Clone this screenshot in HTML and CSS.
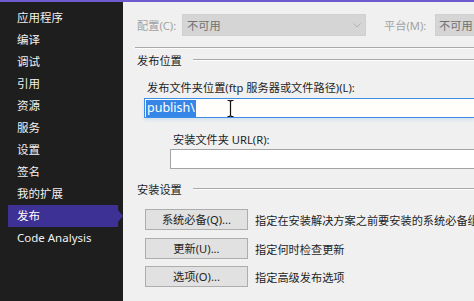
FILE: index.html
```html
<!DOCTYPE html>
<html lang="zh-CN">
<head>
<meta charset="utf-8">
<title>发布</title>
<link rel="stylesheet" href="styles.css">
</head>
<body>
<div class="topbar"></div>
<div class="main">
  <nav class="sidebar">
    <div class="nav-item">应用程序</div>
    <div class="nav-item">编译</div>
    <div class="nav-item">调试</div>
    <div class="nav-item">引用</div>
    <div class="nav-item">资源</div>
    <div class="nav-item">服务</div>
    <div class="nav-item">设置</div>
    <div class="nav-item">签名</div>
    <div class="nav-item">我的扩展</div>
    <div class="nav-item active">发布</div>
    <div class="nav-item">Code Analysis</div>
  </nav>
  <section class="content">
    <div class="toprow">
      <span class="dlabel cfg">配置(C):</span>
      <div class="combo combo1"><span>不可用</span><svg class="chev" width="8" height="5" viewBox="0 0 8 5"><path d="M0.5 0.5 L4 4 L7.5 0.5" fill="none" stroke="#b0b0b0" stroke-width="1"/></svg></div>
      <span class="dlabel plat">平台(M):</span>
      <div class="combo combo2"><span>不可用</span></div>
    </div>
    <div class="sep"></div>
    <div class="header h1"><span>发布位置</span><div class="hline"></div></div>
    <div class="label l1">发布文件夹位置(ftp 服务器或文件路径)(L):</div>
    <div class="textbox active-box"><span class="sel">publish\</span>
      <svg class="ibeam" width="7" height="17" viewBox="0 0 7 17"><path d="M0.5 0.5 H2.5 L3.5 1.5 L4.5 0.5 H6.5 M3.5 1.5 V15.5 M0.5 16.5 H2.5 L3.5 15.5 L4.5 16.5 H6.5" fill="none" stroke="#111" stroke-width="1.2"/></svg>
    </div>
    <div class="label l2">安装文件夹 URL(R):</div>
    <div class="textbox box2"></div>
    <div class="header h2"><span>安装设置</span><div class="hline"></div></div>
    <div class="btnrow r1"><div class="btn">系统必备(Q)...</div><span class="desc">指定在安装解决方案之前要安装的系统必备组件</span></div>
    <div class="btnrow r2"><div class="btn">更新(U)...</div><span class="desc">指定何时检查更新</span></div>
    <div class="btnrow r3"><div class="btn">选项(O)...</div><span class="desc">指定高级发布选项</span></div>
  </section>
</div>
</body>
</html>
```
FILE: styles.css
```css
* { box-sizing: border-box; }
html, body { margin: 0; padding: 0; }
body {
  width: 474px;
  height: 301px;
  overflow: hidden;
  background: #f0f0f0;
  font-family: "Noto Sans", "Noto Sans CJK SC", sans-serif;
  display: flex;
  flex-direction: column;
}
.topbar { height: 2px; background: #6c5ccf; flex: none; }
.main { flex: 1; display: flex; min-height: 0; }
.sidebar {
  width: 123px;
  flex: none;
  background: #1e1e1e;
  padding-top: 5px;
}
.nav-item {
  position: relative;
  height: 22px;
  line-height: 22px;
  margin: 0 5px 0 8px;
  padding-left: 9px;
  color: #f1f1f1;
  font-size: 11.5px;
  white-space: nowrap;
}
.nav-item.active { background: #3e3196; color: #fff; }
.nav-item.active::after {
  content: "";
  position: absolute;
  right: -5px;
  top: 5px;
  border-top: 6px solid transparent;
  border-bottom: 6px solid transparent;
  border-left: 5px solid #3e3196;
}
.content {
  flex: 1;
  min-width: 0;
  overflow: hidden;
  padding-left: 12px;
  font-size: 11.2px;
  color: #1e1e1e;
  white-space: nowrap;
}
.toprow { display: flex; align-items: center; height: 22px; margin-top: 12px; }
.dlabel { color: #a2a2a2; flex: none; }
.cfg { width: 47px; padding-left: 2px; }
.plat { width: 51px; margin-left: 18px; }
.combo {
  height: 22px;
  background: #d5d5d5;
  border: 1px solid #d0d0d0;
  color: #707070;
  display: flex;
  align-items: center;
  padding-left: 4px;
  flex: none;
}
.combo1 { width: 184px; justify-content: space-between; padding-right: 4px; }
.combo2 { width: 60px; padding-left: 3px; }
.sep {
  margin-top: 11px;
  border-top: 1px solid #a9a9a9;
  border-bottom: 1px solid #fcfcfc;
}
.header {
  display: flex;
  align-items: center;
  height: 14px;
  padding-left: 2px;
}
.header span { flex: none; }
.hline {
  flex: 1;
  margin-left: 11px;
  border-top: 1px solid #a9a9a9;
  border-bottom: 1px solid #fcfcfc;
}
.h1 { margin-top: 4px; }
.label { height: 14px; line-height: 14px; }
.l1 { margin-top: 14px; padding-left: 12px; }
.textbox {
  position: relative;
  height: 20px;
  background: #fff;
  border: 1px solid #a3a3a3;
  border-right: none;
}
.active-box {
  margin-top: 3px;
  margin-left: 9px;
  border-color: #3b8ee3;
  background: #fffefa;
  padding: 1px 0 0 1px;
  box-shadow: 0 2px 3px rgba(120, 180, 240, 0.25);
}
.sel {
  display: inline-block;
  background: #3586e6;
  color: #fff;
  height: 17px;
  line-height: 16px;
  padding: 0 1px;
  font-size: 12.5px;
}
.ibeam { position: absolute; left: 82px; top: 1px; }
.l2 { margin-top: 15px; padding-left: 38px; }
.box2 { margin-top: 2px; margin-left: 35px; }
.h2 { margin-top: 13px; }
.btnrow { display: flex; align-items: center; height: 21px; padding-left: 10px; }
.r1 { margin-top: 13px; }
.r2 { margin-top: 8px; }
.r3 { margin-top: 7px; }
.btn {
  width: 103px;
  height: 21px;
  line-height: 19px;
  text-align: center;
  background: #e1e1e1;
  border: 1px solid #adadad;
  flex: none;
}
.desc { margin-left: 7px; }
```
